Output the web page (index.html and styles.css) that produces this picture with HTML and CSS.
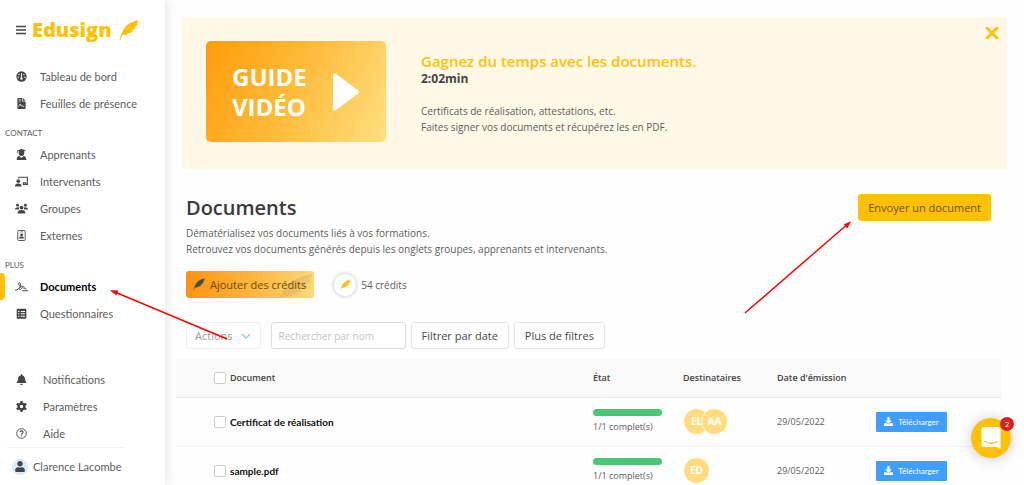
FILE: index.html
```
<!DOCTYPE html>
<html lang="fr">

<head>
    <meta charset="UTF-8">
    <meta name="viewport" content="width=device-width, initial-scale=1.0">
    <title>Edusign - Documents</title>
    <link rel="stylesheet" href="styles.css">
</head>

<body>
    <svg class="sprite" aria-hidden="true">
        <symbol id="feather" viewBox="0 0 20 20">
            <path d="M.6 19.800C1.500 16 2.600 12.800 4.200 10 7 5 11.500 1.500 19.600.2c-.1 1.400-.9 2.600-2.300 3.400l1.600.2c-.7 1.700-2 2.700-3.900 3.300l2 .4c-1.200 1.700-2.900 2.500-4.900 2.900l1.900.6c-1.700 1.900-3.900 2.600-6.300 2.500l1.300.8c-1.700.8-3.400.8-5.200.3C2.700 16 1.900 17.800 1.200 19.900z" />
        </symbol>
        <symbol id="download" viewBox="0 0 512 512">
            <path d="M216 0h80c13.300 0 24 10.700 24 24v168h87.700c17.800 0 26.700 21.500 14.100 34.100L269.700 378.300c-7.500 7.500-19.800 7.500-27.300 0L90.100 226.100c-12.600-12.600-3.700-34.100 14.100-34.100H192V24c0-13.300 10.700-24 24-24zm296 376v112c0 13.300-10.700 24-24 24H24c-13.300 0-24-10.700-24-24V376c0-13.300 10.700-24 24-24h146.700l49 49c20.100 20.100 52.500 20.100 72.600 0l49-49H488c13.300 0 24 10.700 24 24z" />
        </symbol>
    </svg>

    <div class="app">
        <aside class="sidebar">
            <div class="brand">
                <button class="menu-btn" aria-label="Menu">
                    <svg width="10" height="10" viewBox="0 0 10 10"><path d="M0 1.500h10M0 5h10M0 8.500h10" stroke="#444" stroke-width="1.300" /></svg>
                </button>
                <a class="logo" href="#">Edusign
                    <svg width="20" height="20"><use href="#feather" /></svg>
                </a>
            </div>

            <nav class="nav">
                <a class="nav-link" href="#">
                    <svg class="icon" viewBox="0 0 16 16"><circle cx="8" cy="8" r="7.500" /><path d="M8 3v7" stroke="#fff" stroke-width="1.300" /><circle cx="8" cy="11" r="1.800" fill="#fff" /><g fill="#fff"><circle cx="4.500" cy="5" r="1" /><circle cx="11.500" cy="5" r="1" /><circle cx="3" cy="9" r="1" /><circle cx="13" cy="9" r="1" /></g></svg>
                    Tableau de bord
                </a>
                <a class="nav-link" href="#">
                    <svg class="icon" viewBox="0 0 16 16"><path d="M3 0h6v5h5v10q0 1-1 1H3q-1 0-1-1V1q0-1 1-1zM10 0l4 4h-4z" /><path d="M4 2.500h3M4 4.500h3M4 12.500l2-4 1.500 3 1.500-1 1 2h2" fill="none" stroke="#fff" stroke-width="1.100" /></svg>
                    Feuilles de présence
                </a>

                <h2 class="nav-title">CONTACT</h2>
                <a class="nav-link" href="#">
                    <svg class="icon" viewBox="0 0 16 16"><path d="M8 0l7 2-3 1v3a4 4 0 0 1-8 0V3L2.500 2.600V6h-1V2zM5 10l3 3 3-3c2.500.3 4 2 4 6H1c0-4 1.500-5.700 4-6z" /></svg>
                    Apprenants
                </a>
                <a class="nav-link" href="#">
                    <svg class="icon" viewBox="0 0 20 16"><circle cx="5" cy="7.500" r="2.800" /><path d="M0 15.500c0-3.500 2-4.500 5-4.500s5 1 5 4.500z" /><path d="M6 3.500V1.500h13v11h-7M13 12.500v-2.500h3.500v2.500" fill="none" stroke="#444" stroke-width="1.700" /></svg>
                    Intervenants
                </a>
                <a class="nav-link" href="#">
                    <svg class="icon" viewBox="0 0 20 16"><circle cx="4" cy="3" r="2.200" /><circle cx="16" cy="3" r="2.200" /><circle cx="10" cy="6.500" r="2.900" /><path d="M0 9.500C0 7 1.500 6 5.800 6L6.500 9.500zM20 9.500C20 7 18.500 6 14.200 6L13.500 9.500zM4 15.500c0-3.800 2-5.200 6-5.200s6 1.400 6 5.200z" /></svg>
                    Groupes
                </a>
                <a class="nav-link" href="#">
                    <svg class="icon" viewBox="0 0 16 16"><rect x="2.600" y=".7" width="10.800" height="14.600" rx="1.500" fill="none" stroke="#444" stroke-width="1.300" /><path d="M6 2.800h4" stroke="#444" /><circle cx="8" cy="7" r="2" /><path d="M4.500 12.500c0-2.200 1-3 3.500-3s3.500.8 3.500 3z" /></svg>
                    Externes
                </a>

                <h2 class="nav-title">PLUS</h2>
                <a class="nav-link active" href="#">
                    <svg class="icon" viewBox="0 0 20 16"><path d="M0 13.500h2c4-1 7-6 6.500-9.500C8 1 4.500 2 5 4.500c.5 2.500 5 2 6 4 1 2.500-3.500 5.500-4.500 3.500s5-5 7-4-1.500 3.500 1 3.500h3M11 14.500h9" fill="none" stroke="#444" stroke-width="1.400" /></svg>
                    Documents
                </a>
                <a class="nav-link" href="#">
                    <svg class="icon" viewBox="0 0 16 16"><rect x="1" y="1" width="14" height="14.500" rx="1.500" /><path d="M3 5h2M3 8.500h2M3 12h2M7 5h6M7 8.500h6M7 12h6" stroke="#fff" stroke-width="1.500" /></svg>
                    Questionnaires
                </a>
            </nav>

            <nav class="nav nav-bottom">
                <a class="nav-link" href="#">
                    <svg class="icon" viewBox="-32 0 512 512"><path d="M224 512c35.320 0 63.970-28.650 63.970-64H160.030c0 35.350 28.650 64 63.970 64zm215.390-149.710c-19.320-20.760-55.470-51.990-55.470-154.290 0-77.700-54.480-139.900-127.940-155.160V32c0-17.670-14.320-32-31.980-32s-31.980 14.330-31.980 32v20.840C118.560 68.100 64.080 130.300 64.080 208c0 102.300-36.150 133.530-55.470 154.290-6 6.450-8.660 14.160-8.610 21.710.11 16.400 12.980 32 32.100 32h383.800c19.120 0 32-15.600 32.100-32 .05-7.550-2.610-15.270-8.610-21.710z" /></svg>
                    Notifications
                </a>
                <a class="nav-link" href="#">
                    <svg class="icon" viewBox="0 0 16 16"><circle cx="8" cy="8" r="4.200" fill="none" stroke="#444" stroke-width="3.400" /><path d="M8 0v4M8 12v4M1.100 4l3.400 2M11.500 10l3.400 2M1.100 12l3.400-2M11.500 6l3.400-2" stroke="#444" stroke-width="3.400" /></svg>
                    Paramètres
                </a>
                <a class="nav-link" href="#">
                    <svg class="icon" viewBox="0 0 16 16"><circle cx="8" cy="8" r="7" fill="none" stroke="#444" stroke-width="1.300" /><path d="M5.800 6.300c.2-3 4.600-2.600 4.500-.1C10.200 8 8 7.800 8 9.700M8 10.900v1.500" fill="none" stroke="#444" stroke-width="1.500" /></svg>
                    Aide
                </a>
            </nav>

            <a class="user" href="#">
                <span class="avatar"><svg width="10" height="11" viewBox="0 0 448 512"><path d="M224 256c70.700 0 128-57.300 128-128S294.700 0 224 0 96 57.300 96 128s57.300 128 128 128zm89.600 32h-16.700c-22.200 10.200-46.900 16-72.900 16s-50.600-5.800-72.900-16h-16.700C60.200 288 0 348.200 0 422.400V464c0 26.500 21.500 48 48 48h352c26.500 0 48-21.500 48-48v-41.600c0-74.200-60.200-134.400-134.400-134.400z" fill="#444" /></svg></span>
                Clarence Lacombe
            </a>
        </aside>

        <main class="main">
            <section class="banner">
                <button class="video">
                    <span>GUIDE<br>VIDÉO</span>
                    <svg width="26" height="38" viewBox="0 0 26 38"><path d="M2 2.500v33L24 19z" fill="#fff" stroke="#fff" stroke-width="4" stroke-linejoin="round" /></svg>
                </button>
                <div class="banner-text">
                    <h2>Gagnez du temps avec les documents.</h2>
                    <strong>2:02min</strong>
                    <p>Certificats de réalisation, attestations, etc.<br>Faites signer vos documents et récupérez les en PDF.</p>
                </div>
                <button class="close-btn" aria-label="Fermer">
                    <svg width="14" height="14" viewBox="0 0 14 14"><path d="M2 2l10 10M12 2L2 12" stroke="#ffc107" stroke-width="2.800" stroke-linecap="round" /></svg>
                </button>
            </section>

            <section class="content">
                <div class="page-header">
                    <div>
                        <h1>Documents</h1>
                        <p>Dématérialisez vos documents liés à vos formations.<br>Retrouvez vos documents générés depuis les onglets groupes, apprenants et intervenants.</p>
                    </div>
                    <button class="btn btn-primary">Envoyer un document</button>
                </div>

                <div class="credits">
                    <button class="btn btn-credits">
                        <svg width="12" height="13"><use href="#feather" /></svg>
                        Ajouter des crédits
                        <svg class="watermark" width="36" height="30" viewBox="0 0 20 20" preserveAspectRatio="none"><use href="#feather" /></svg>
                    </button>
                    <span class="credit-icon"><svg width="11" height="12"><use href="#feather" /></svg></span>
                    <span>54 crédits</span>
                </div>

                <div class="filters">
                    <button class="btn btn-outline btn-actions" disabled>
                        Actions
                        <svg width="10" height="6" viewBox="0 0 10 6"><path d="M1 1l4 4 4-4" fill="none" stroke="#409eff" stroke-width="1.400" /></svg>
                    </button>
                    <input class="search" type="text" placeholder="Rechercher par nom" aria-label="Rechercher par nom">
                    <button class="btn btn-outline">Filtrer par date</button>
                    <button class="btn btn-outline">Plus de filtres</button>
                </div>
            </section>

            <table class="table">
                <colgroup>
                    <col>
                    <col class="col-state">
                    <col class="col-people">
                    <col class="col-date">
                    <col class="col-action">
                </colgroup>
                <thead>
                    <tr>
                        <th><label class="check"><input type="checkbox">Document</label></th>
                        <th>État</th>
                        <th>Destinataires</th>
                        <th>Date d'émission</th>
                        <th></th>
                    </tr>
                </thead>
                <tbody>
                    <tr>
                        <td><label class="check"><input type="checkbox">Certificat de réalisation</label></td>
                        <td><div class="progress"></div>1/1 complet(s)</td>
                        <td><div class="people"><span>EL</span><span>AA</span></div></td>
                        <td>29/05/2022</td>
                        <td><button class="btn-download"><svg width="9" height="9"><use href="#download" /></svg>Télécharger</button></td>
                    </tr>
                    <tr>
                        <td><label class="check"><input type="checkbox">sample.pdf</label></td>
                        <td><div class="progress"></div>1/1 complet(s)</td>
                        <td><div class="people"><span>ED</span></div></td>
                        <td>29/05/2022</td>
                        <td><button class="btn-download"><svg width="9" height="9"><use href="#download" /></svg>Télécharger</button></td>
                    </tr>
                </tbody>
            </table>
        </main>
    </div>

    <button class="chat" aria-label="Messagerie">
        <svg width="20" height="22" viewBox="0 0 20 22"><path d="M3 0h14q2.500 0 2.500 2.500V22l-4-2H3Q.5 20 .5 17.500v-15Q.5 0 3 0z" fill="#fff" /><path d="M4 14.500q6 4 12 0" fill="none" stroke="#ffc107" stroke-width="1.300" stroke-linecap="round" /></svg>
        <span class="chat-badge">2</span>
    </button>

    <!-- Tutorial arrows -->
    <svg class="arrows" width="1024" height="485" aria-hidden="true">
        <g stroke="#f00" stroke-width="1.400" fill="#f00">
            <path d="M227 339L116 292.500M745 313l101-87.500" />
            <path d="M110.500 290.500l7.500.3-1.800 4.200zM850.500 221.800l-3.300 6.200-3-3.500z" stroke-width=".6" />
        </g>
    </svg>
</body>

</html>
```

FILE: styles.css
```
* {
    box-sizing: border-box;
}

body {
    margin: 0;
    font-family: 'Open Sans', 'Noto Sans', sans-serif;
    font-size: 10px;
    line-height: 16px;
    color: #5c5c5c;
    background-color: #fefefe;
}

h1,
h2,
p {
    margin: 0;
}

a {
    color: inherit;
    text-decoration: none;
}

button {
    font-family: inherit;
    cursor: pointer;
}

.sprite {
    display: none;
}

.app {
    display: flex;
    height: 100vh;
}

/* Sidebar */
.sidebar {
    display: flex;
    flex-direction: column;
    flex: 0 0 165px;
    min-width: 0;
    font-family: Lato, 'Open Sans', sans-serif;
    background-color: #fff;
    box-shadow: 0 0 12px rgba(0, 0, 0, 0.12);
}

.brand {
    display: flex;
    align-items: center;
    gap: 6px;
    height: 63px;
    padding: 0 0 3px 16px;
}

.menu-btn,
.close-btn {
    display: flex;
    padding: 0;
    border: none;
    background: none;
}

.logo {
    display: flex;
    align-items: center;
    gap: 7px;
    font-family: 'Open Sans', sans-serif;
    font-size: 20px;
    font-weight: 800;
    color: #ffc107;
}

.logo svg,
.credit-icon svg {
    fill: #ffc107;
}

.nav-link {
    display: flex;
    align-items: center;
    gap: 12px;
    height: 27px;
    padding-left: 15px;
    font-size: 11px;
}

.icon {
    width: 13px;
    height: 11px;
    fill: #444;
}

.nav-title {
    height: 24px;
    padding: 8px 0 0 5px;
    font-size: 8px;
    font-weight: 400;
}

.active {
    color: #000;
    font-weight: 700;
}

.active::before {
    content: '';
    width: 5px;
    height: 27px;
    margin: 0 -7px 0 -15px;
    border-radius: 0 4px 4px 0;
    background-color: #ffc107;
}

.active .icon {
    margin-left: 5px;
}

.nav-bottom {
    margin-top: auto;
}

.nav-bottom .nav-link {
    gap: 15px;
}

.user {
    display: flex;
    align-items: center;
    gap: 5px;
    height: 38px;
    margin: 0 40px 0 7px;
    padding-left: 5px;
    border-top: 1px solid #f2f2f2;
    font-size: 11px;
    white-space: nowrap;
}

.avatar {
    display: flex;
    align-items: center;
    justify-content: center;
    flex-shrink: 0;
    width: 16px;
    height: 16px;
    border-radius: 50%;
    background-color: #d9ecff;
}

/* Main */
.main {
    flex: 1;
    min-width: 0;
    padding-top: 17px;
    overflow-y: auto;
    scrollbar-width: none;
}

.banner {
    display: flex;
    gap: 35px;
    margin: 0 17px;
    padding: 24px 24px 27px;
    background-color: #fff8e6;
}

.video {
    display: flex;
    align-items: center;
    justify-content: space-between;
    width: 180px;
    height: 101px;
    padding: 0 27px 0 26px;
    border: none;
    border-radius: 5px;
    background: linear-gradient(115deg, #ff9c0a, #ffb937 45%, #ffdf80);
    color: #fff;
    font-size: 24px;
    font-weight: 700;
    line-height: 30px;
    text-align: left;
}

.banner-text {
    flex: 1;
    padding-top: 10px;
}

.banner-text h2 {
    font-size: 15px;
    font-weight: 600;
    line-height: 20px;
    color: #ffc107;
}

.banner-text strong {
    font-size: 12px;
    color: #444;
}

.banner-text p {
    margin-top: 16px;
}

.close-btn {
    align-self: flex-start;
    margin: -15px -16px 0 0;
}

.content {
    padding: 25px 33px 0 21px;
}

.page-header {
    display: flex;
    justify-content: space-between;
    align-items: flex-start;
}

h1 {
    margin-bottom: 3px;
    font-size: 20px;
    font-weight: 600;
    line-height: 28px;
    color: #3a3a3a;
}

.btn {
    height: 27px;
    padding: 0 10px;
    border: none;
    border-radius: 3px;
    font-size: 11px;
    white-space: nowrap;
}

.btn-primary {
    background-color: #ffc107;
    color: #6b5310;
}

.credits {
    display: flex;
    align-items: center;
    margin-top: 14px;
}

.btn-credits {
    position: relative;
    display: flex;
    align-items: center;
    gap: 5px;
    padding: 0 8px 0 7px;
    overflow: hidden;
    background: linear-gradient(100deg, #ff920f, #ffb43c 50%, #ffd978);
    color: #6b4a10;
}

.btn-credits svg {
    fill: #4a4a4a;
}

.watermark {
    position: absolute;
    right: 1px;
    bottom: -6px;
    opacity: 0.1;
}

.credit-icon {
    display: flex;
    align-items: center;
    justify-content: center;
    width: 22px;
    height: 22px;
    margin: 0 5px 0 20px;
    border-radius: 50%;
    background-color: #fff;
    box-shadow: 0 0 4px rgba(0, 0, 0, 0.25);
}

.filters {
    display: flex;
    gap: 5px;
    margin-top: 24px;
}

.btn-outline {
    border: 1px solid #e4e4e4;
    background-color: #fff;
    color: #484848;
}

.btn-actions {
    display: flex;
    align-items: center;
    gap: 8px;
    margin-right: 5px;
    padding: 0 9px 0 8px;
    opacity: 0.55;
}

.search {
    width: 135px;
    height: 27px;
    padding: 0 7px;
    border: 1px solid #ddd;
    border-radius: 3px;
    font-family: inherit;
    font-size: 10px;
}

.search::placeholder {
    color: #c4c4c4;
}

/* Documents table */
.table {
    width: calc(100% - 34px);
    margin: 10px 23px 0 11px;
    border-collapse: collapse;
    table-layout: fixed;
    font-size: 9px;
}

.col-state {
    width: 90px;
}

.col-people {
    width: 94px;
}

.col-date {
    width: 99px;
}

.col-action {
    width: 130px;
}

th,
td {
    height: 49px;
    padding: 0 5px;
    border-bottom: 1px solid #f3f3f3;
    text-align: left;
    line-height: 14px;
    white-space: nowrap;
}

th {
    height: 38px;
    border-bottom-color: #ebebeb;
    background-color: #f9f9f9;
    font-weight: 600;
    color: #444;
}

.check {
    display: flex;
    align-items: center;
    gap: 4px;
    padding-left: 33px;
}

td .check {
    font-family: Lato, 'Open Sans', sans-serif;
    font-size: 10px;
    font-weight: 700;
    color: #111;
}

.check input {
    appearance: none;
    width: 12px;
    height: 12px;
    margin: 0;
    border: 1px solid #ccc;
    border-radius: 2px;
    background-color: #fff;
}

.progress {
    width: 69px;
    height: 7px;
    margin-bottom: 4px;
    border-radius: 4px;
    background-color: #48c774;
}

.people {
    display: flex;
}

.people span {
    width: 27px;
    margin-right: -9px;
    border: 1px solid #fff;
    border-radius: 50%;
    background-color: #ffdd7d;
    color: #fff;
    font-size: 10px;
    font-weight: 700;
    line-height: 25px;
    text-align: center;
}

.btn-download {
    display: flex;
    align-items: center;
    justify-content: center;
    gap: 5px;
    width: 71px;
    height: 20px;
    padding: 0;
    border: none;
    border-radius: 1px;
    background-color: #409eff;
    color: #fff;
    font-family: Lato, 'Open Sans', sans-serif;
    font-size: 8px;
}

.btn-download svg {
    fill: #fff;
}

/* Chat launcher */
.chat {
    position: fixed;
    right: 13px;
    bottom: 27px;
    display: flex;
    align-items: center;
    justify-content: center;
    width: 40px;
    height: 40px;
    padding: 0;
    border: none;
    border-radius: 50%;
    background-color: #ffc107;
    box-shadow: 0 1px 14px rgba(0, 0, 0, 0.2);
}

.chat-badge {
    position: absolute;
    top: -1px;
    right: -3px;
    width: 14px;
    height: 14px;
    border-radius: 50%;
    background-color: #d32222;
    color: #fff;
    font-size: 8px;
    line-height: 14px;
}

.arrows {
    position: absolute;
    top: 0;
    left: 0;
    pointer-events: none;
}
```
